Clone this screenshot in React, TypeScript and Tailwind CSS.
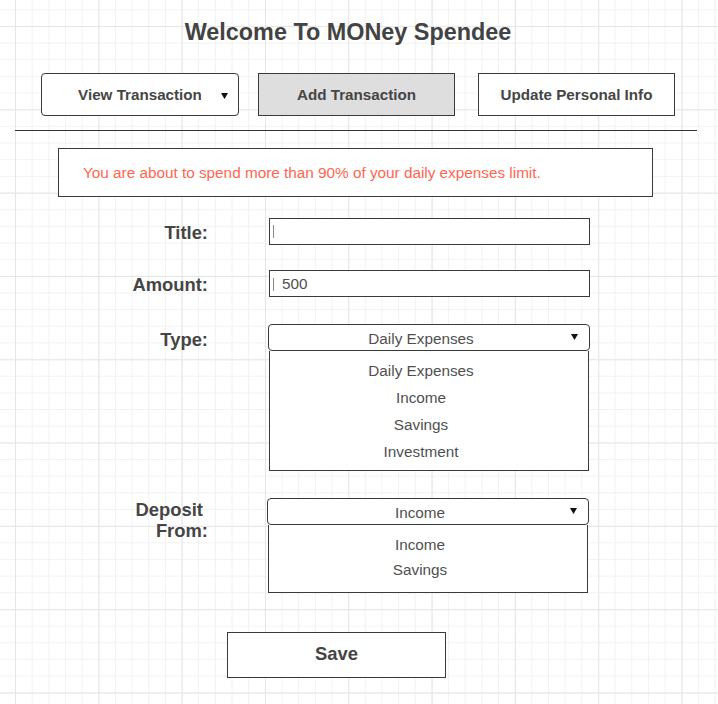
import React from "react";

function Caret({ className = "" }: { className?: string }) {
  return (
    <svg width="7" height="6" viewBox="0 0 7 6" className={className}>
      <polygon points="0,0 7,0 3.5,6" fill="#111" />
    </svg>
  );
}

function Label({ children }: { children: React.ReactNode }) {
  return (
    <div className="w-[208px] shrink-0 text-right text-[18.4px] font-bold leading-[21px] text-[#454545]">
      {children}
    </div>
  );
}

function Cursor() {
  return <span className="inline-block h-[13px] w-px bg-[#8a8a8a]" />;
}

export default function App() {
  return (
    <div
      className="min-h-[704px] w-full text-[#454545] [font-family:'Liberation_Sans',Arial,sans-serif] bg-white [background-image:linear-gradient(to_right,#e6e6e6_1px,transparent_1px),linear-gradient(to_bottom,#e6e6e6_1px,transparent_1px),linear-gradient(to_right,#f2f2f2_1px,transparent_1px),linear-gradient(to_bottom,#f2f2f2_1px,transparent_1px)] [background-size:83.333px_83.333px,83.333px_83.333px,16.667px_16.667px,16.667px_16.667px] [background-position:15px_26px,15px_26px,15px_9.3px,15px_9.3px]"
    >
      <div className="flex flex-col">
        <h1 className="mt-[19px] pr-[22px] text-center text-[23.4px] font-bold leading-[27px] text-[#434343]">
          Welcome To MONey Spendee
        </h1>

        <div className="mt-[27px] flex pl-[41px]">
          <div className="relative flex h-[43px] w-[198px] items-center justify-center rounded-[4px] border border-[#3a3a3a] bg-white pt-[2px] text-[15.2px] font-bold text-[#454545]">
            <span>View Transaction</span>
            <Caret className="absolute right-[10px] top-[19px]" />
          </div>
          <div className="ml-[19px] flex h-[43px] w-[197px] items-center justify-center border border-[#3a3a3a] bg-[#dedede] pt-[2px] text-[15.2px] font-bold text-[#454545]">
            Add Transaction
          </div>
          <div className="ml-[23px] flex h-[43px] w-[197px] items-center justify-center border border-[#3a3a3a] bg-white pt-[2px] text-[15.2px] font-bold text-[#454545]">
            Update Personal Info
          </div>
        </div>

        <div className="ml-[15px] mt-[14px] h-px w-[682px] bg-[#333]" />

        <div className="ml-[58px] mt-[17px] flex h-[49px] w-[595px] items-center border border-[#3a3a3a] bg-white pl-[24px] pt-[2px] text-[15.3px] text-[#ff6650]">
          You are about to spend more than 90% of your daily expenses limit.
        </div>

        <div className="mt-[21px] flex items-center">
          <div className="pt-[2px]">
            <Label>Title:</Label>
          </div>
          <div className="ml-[61px] flex h-[27px] w-[321px] items-center border border-[#3a3a3a] bg-white pl-[3px]">
            <Cursor />
          </div>
        </div>

        <div className="mt-[25px] flex items-center">
          <div className="pt-[2px]">
            <Label>Amount:</Label>
          </div>
          <div className="ml-[61px] flex h-[27px] w-[321px] items-center border border-[#3a3a3a] bg-white pl-[3px] pt-[1px] text-[15.3px] text-[#505050]">
            <Cursor />
            <span className="ml-[8px] pt-[1px]">500</span>
          </div>
        </div>

        <div className="mt-[27px] flex items-start">
          <div className="pt-[5px]">
            <Label>Type:</Label>
          </div>
          <div className="ml-[60px] flex flex-col">
            <div className="relative flex h-[27px] w-[322px] items-center justify-center rounded-[4px] border border-[#3a3a3a] bg-white pr-[16px] pt-[4px] text-[15.3px] text-[#505050]">
              Daily Expenses
              <Caret className="absolute right-[11px] top-[9px]" />
            </div>
            <div className="ml-px flex h-[120px] w-[320px] flex-col border border-t-0 border-[#3a3a3a] bg-white pr-[16px] pt-[7px] text-center text-[15.3px] leading-[26.7px] text-[#505050]">
              <div>Daily Expenses</div>
              <div>Income</div>
              <div className="pt-[1px]">Savings</div>
              <div>Investment</div>
            </div>
          </div>
        </div>

        <div className="mt-[27px] flex items-start">
          <div className="pt-[1px]">
            <Label>
              <div className="pr-[5px]">Deposit</div>
              <div>From:</div>
            </Label>
          </div>
          <div className="ml-[59px] flex flex-col">
            <div className="relative flex h-[27px] w-[322px] items-center justify-center rounded-[4px] border border-[#3a3a3a] bg-white pr-[16px] pt-[3px] text-[15.3px] text-[#505050]">
              Income
              <Caret className="absolute right-[11px] top-[9px]" />
            </div>
            <div className="ml-px flex h-[68px] w-[320px] flex-col border border-t-0 border-[#3a3a3a] bg-white pr-[16px] pt-[7px] text-center text-[15.3px] leading-[25px] text-[#505050]">
              <div>Income</div>
              <div>Savings</div>
            </div>
          </div>
        </div>

        <div className="ml-[227px] mt-[39px] flex h-[46px] w-[219px] items-center justify-center border border-[#3a3a3a] bg-white pb-[2px] text-[18.4px] font-bold text-[#454545]">
          Save
        </div>
      </div>
    </div>
  );
}
